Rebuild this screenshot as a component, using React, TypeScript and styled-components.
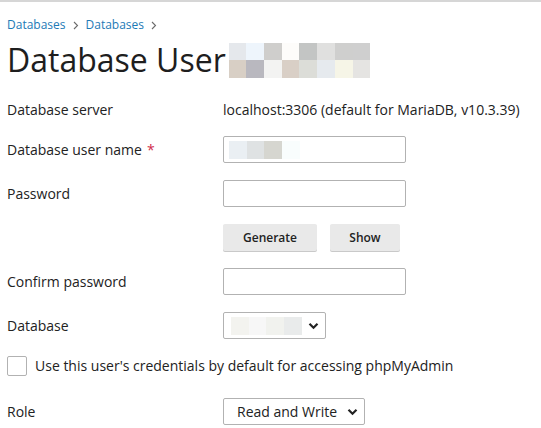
import React from 'react'
import styled, { createGlobalStyle } from 'styled-components'

const GlobalStyle = createGlobalStyle`
  html, body {
    margin: 0;
    padding: 0;
    background: #ffffff;
  }
  body {
    font-family: "Open Sans", "Liberation Sans", sans-serif;
    color: #222222;
  }
`

const TopEdge = styled.div`
  height: 2px;
  background-color: #d6d6d6;
`

const Page = styled.div`
  padding: 0 7px;
`

const Crumbs = styled.nav`
  display: flex;
  align-items: center;
  gap: 7px;
  font-size: 12px;
  line-height: 16px;
  padding-top: 15px;
`

const CrumbLink = styled.a`
  color: #1d7ab6;
  text-decoration: none;
`

const Heading = styled.h1`
  display: flex;
  align-items: center;
  margin: 3px 0 0;
  font-size: 32px;
  line-height: 48px;
  font-weight: 400;
  color: #1e1e1e;
`

const Pixels = styled.span<{ cols: number; size: number; rowH: number }>`
  display: inline-grid;
  grid-template-columns: repeat(${p => p.cols}, ${p => p.size}px);
  grid-auto-rows: ${p => p.rowH}px;
  margin-left: 3px;
`

const Cell = styled.span<{ color: string }>`
  background-color: ${p => p.color};
`

const Form = styled.div`
  display: flex;
  flex-direction: column;
  gap: 17px;
  margin-top: 12px;
`

const Row = styled.div`
  display: flex;
  align-items: center;
  min-height: 27px;
  font-size: 14px;
`

const Label = styled.div`
  width: 216px;
  flex-shrink: 0;
`

const Required = styled.span`
  color: #d02d4b;
  margin-left: 5px;
`

const TextInput = styled.div`
  box-sizing: border-box;
  width: 183px;
  height: 27px;
  border: 1px solid #b2b2b2;
  border-radius: 2px;
  background: #fff;
  display: flex;
  align-items: center;
  padding-left: 2px;
`

const Buttons = styled.div`
  display: flex;
  gap: 13px;
`

const Button = styled.button<{ w: number }>`
  width: ${p => p.w}px;
  height: 27px;
  border: none;
  border-radius: 2px;
  background: #e9e9e9;
  box-shadow: 0 1px 0 #c9c9c9;
  font-family: "Open Sans", "Liberation Sans", sans-serif;
  font-size: 12px;
  font-weight: 600;
  color: #222;
  padding: 0;
`

const Select = styled.div<{ w: number }>`
  box-sizing: border-box;
  width: ${p => p.w}px;
  height: 27px;
  border: 1px solid #b2b2b2;
  border-radius: 2px;
  background: #fff;
  display: flex;
  align-items: center;
  justify-content: space-between;
  padding: 0 6px 0 4px;
  font-size: 14px;
`

const SelectText = styled.span`
  padding-left: 9px;
`

const Box = styled.span`
  box-sizing: border-box;
  width: 20px;
  height: 20px;
  border: 1px solid #b2b2b2;
  border-radius: 2px;
  margin-right: 8px;
`

const CheckRow = styled(Row)`
  margin-top: -4px;
  margin-bottom: 2px;
`

const Chevron = () => (
  <svg width="11" height="8" viewBox="0 0 11 8">
    <path d="M1.5 1.8 L5.5 5.8 L9.5 1.8" fill="none" stroke="#222" strokeWidth="2.2" />
  </svg>
)

const CrumbArrow = () => (
  <svg width="6" height="9" viewBox="0 0 6 9">
    <path d="M1 1 L4.5 4.5 L1 8" fill="none" stroke="#6b6b6b" strokeWidth="1.1" />
  </svg>
)

const headingPixels = [
  '#e5e8ec', '#eef5fc', '#cfcecc', '#fdfcfa', '#c3c5c4', '#e0e0df', '#cfcfce', '#cfcfcf',
  '#d8cfc5', '#b9b8bf', '#f3f3f2', '#d9cfc6', '#dcddd8', '#e6eaee', '#f6f5e7', '#e5e4e2',
]
const userPixels = ['#eaeff3', '#dfe2e3', '#d6d6d0', '#f9fdfd']
const dbPixels = ['#f3f3ef', '#f7f7f7', '#f1f2ee', '#e9ebeb']

const App: React.FC = () => {
  return (
    <>
      <GlobalStyle />
      <TopEdge />
      <Page>
        <Crumbs>
          <CrumbLink>Databases</CrumbLink>
          <CrumbArrow />
          <CrumbLink>Databases</CrumbLink>
          <CrumbArrow />
        </Crumbs>
        <Heading>
          Database User
          <Pixels cols={8} size={17.7} rowH={17.5}>
            {headingPixels.map((c, i) => <Cell key={i} color={c} />)}
          </Pixels>
        </Heading>

        <Form>
          <Row>
            <Label>Database server</Label>
            <span>localhost:3306 (default for MariaDB, v10.3.39)</span>
          </Row>
          <Row style={{ marginTop: -4 }}>
            <Label>Database user name<Required>*</Required></Label>
            <TextInput>
              <Pixels cols={4} size={17.7} rowH={18}>
                {userPixels.map((c, i) => <Cell key={i} color={c} />)}
              </Pixels>
            </TextInput>
          </Row>
          <Row>
            <Label>Password</Label>
            <TextInput />
          </Row>
          <Row>
            <Label />
            <Buttons>
              <Button w={94}>Generate</Button>
              <Button w={70}>Show</Button>
            </Buttons>
          </Row>
          <Row>
            <Label>Confirm password</Label>
            <TextInput />
          </Row>
          <Row>
            <Label>Database</Label>
            <Select w={103}>
              <Pixels cols={4} size={17.7} rowH={18}>
                {dbPixels.map((c, i) => <Cell key={i} color={c} />)}
              </Pixels>
              <Chevron />
            </Select>
          </Row>
          <CheckRow>
            <Box />
            <span>Use this user's credentials by default for accessing phpMyAdmin</span>
          </CheckRow>
          <Row>
            <Label>Role</Label>
            <Select w={142}>
              <SelectText>Read and Write</SelectText>
              <Chevron />
            </Select>
          </Row>
        </Form>
      </Page>
    </>
  )
}

export default App
